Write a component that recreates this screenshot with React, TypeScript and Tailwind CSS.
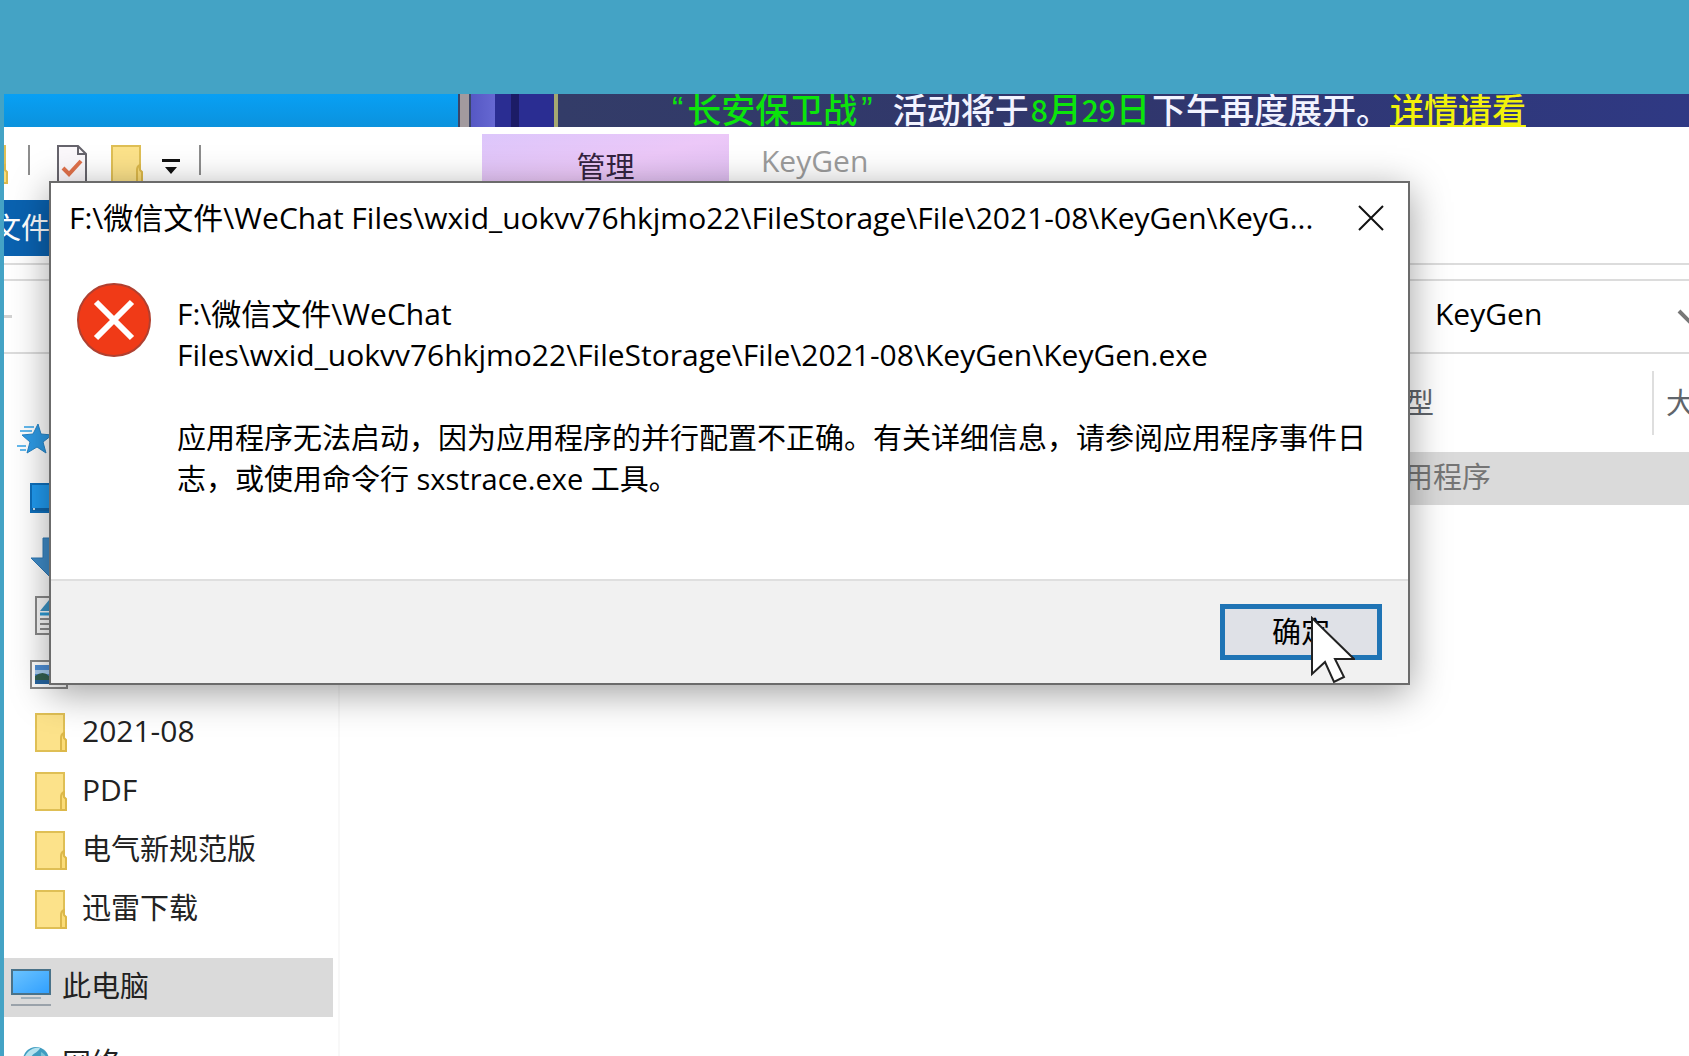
import React from "react";

const UI_FONT = "font-['Open_Sans','Noto_Sans_CJK_SC',sans-serif]";

function FolderIcon({ className = "" }: { className?: string }) {
  return (
    <svg className={className} width="32" height="39" viewBox="0 0 32 39" fill="none" aria-hidden="true">
      <path d="M1 1h28v37H1z" fill="#fce28a" stroke="#dfbf55" strokeWidth="2" />
      <path d="M26 38V25c0-2 1-4 3-5v5l2 2v11z" fill="#fbdc78" stroke="#dcb84a" strokeWidth="2" />
    </svg>
  );
}

function DocCheckIcon() {
  return (
    <svg width="30" height="40" viewBox="0 0 30 40" fill="none" aria-hidden="true">
      <path d="M1 1h20l8 8v30H1z" fill="#fbf8fb" stroke="#66646c" strokeWidth="2" />
      <path d="M21 1v8h8" stroke="#66646c" strokeWidth="2" />
      <path d="m6 23 6 6 12-13" stroke="#e0704a" strokeWidth="4" />
    </svg>
  );
}

function StarIcon() {
  return (
    <svg width="36" height="32" viewBox="0 0 36 32" aria-hidden="true">
      <path d="m22 1 3 10 11 1-9 7 3 11-9-6-10 6 3-11-8-7 11-1z" fill="#2e9be6" stroke="#2684c6" />
      <path d="M8 4h10M4 8h12M1 23h9M4 27h6" stroke="#63b9ee" strokeWidth="2" />
    </svg>
  );
}

function DesktopIcon() {
  return (
    <svg width="38" height="30" viewBox="0 0 38 30" aria-hidden="true">
      <path d="M1 1h36v28H1z" fill="#219bf0" stroke="#0e70bd" strokeWidth="2" />
      <path d="M2 25h34v3H2z" fill="#0f66ad" />
      <circle cx="4" cy="26" r="1" fill="#fff" />
    </svg>
  );
}

function DownloadIcon() {
  return (
    <svg width="38" height="40" viewBox="0 0 38 40" aria-hidden="true">
      <path d="M13 1h12v20h12L19 39 1 21h12z" fill="#3f8cc9" stroke="#2f78b4" />
    </svg>
  );
}

function DocumentIcon() {
  return (
    <svg width="30" height="39" viewBox="0 0 30 39" fill="none" aria-hidden="true">
      <path d="M1 1h28v37H1z" fill="#fbfbfb" stroke="#8a8a8a" strokeWidth="2" />
      <path d="m5 15 9-11 9 11z" fill="#3c93c4" />
      <path d="M5 18h20" stroke="#2d9cd6" strokeWidth="3" />
      <path d="M5 23h20M5 28h20M5 33h20" stroke="#8c8c8c" strokeWidth="2" />
    </svg>
  );
}

function PictureIcon() {
  return (
    <svg width="38" height="29" viewBox="0 0 38 29" aria-hidden="true">
      <path d="M1 1h36v27H1z" fill="#fff" stroke="#8a8a8a" strokeWidth="2" />
      <path d="M5 5h28v19H5z" fill="#4f8fd6" />
      <path d="M5 10h28v4H5z" fill="#a9cdee" />
      <path d="M5 16q8-6 14 0t14 0v4H5z" fill="#33604f" />
      <path d="M5 20h28v4H5z" fill="#2765a0" />
    </svg>
  );
}

function ComputerIcon() {
  return (
    <svg width="40" height="38" viewBox="0 0 40 38" aria-hidden="true">
      <defs>
        <linearGradient id="screen" x1="0" y1="0" x2="1" y2="1">
          <stop offset="0" stopColor="#6cc4ff" />
          <stop offset="1" stopColor="#2f9fff" />
        </linearGradient>
      </defs>
      <path d="M1 1h38v24H1z" fill="url(#screen)" stroke="#4a7289" strokeWidth="2" />
      <path d="M10 29h20" stroke="#9fb0bb" strokeWidth="2" />
      <path d="M0 36h40" stroke="#9aa2aa" strokeWidth="2" />
    </svg>
  );
}

function NetworkIcon() {
  return (
    <svg width="40" height="38" viewBox="0 0 40 38" aria-hidden="true">
      <circle cx="25" cy="14" r="13" fill="#3f9cc0" />
      <path d="M14 10c4-7 10-9 15-8-2 5-8 5-9 10-2 2-5 1-6-2z" fill="#b5e2ee" />
      <path d="M30 6c4 2 7 6 6 11-3 0-7-5-6-11z" fill="#79c3d8" />
      <path d="M1 16h22v15H1z" fill="#58b9fb" stroke="#4a7289" strokeWidth="2" />
    </svg>
  );
}

const pinned = [
  { label: "快速访问", icon: <StarIcon />, pad: "pl-3" },
  { label: "桌面", icon: <DesktopIcon />, pad: "pl-[26px]" },
  { label: "下载", icon: <DownloadIcon />, pad: "pl-[26px]" },
  { label: "文档", icon: <DocumentIcon />, pad: "pl-[31px]" },
];

const folders = [
  { name: "2021-08", size: "text-[30px]" },
  { name: "PDF", size: "text-[30px]" },
  { name: "电气新规范版", size: "text-[29px]" },
  { name: "迅雷下载", size: "text-[29px]" },
];

function Banner() {
  return (
    <div className="flex h-[33px] overflow-hidden">
      <div className="w-[454px] shrink-0 bg-gradient-to-b from-[#08a0f4] to-[#0b92dd]" />
      <div className="w-[13px] shrink-0 border-x-2 border-[#3a4568] bg-[#a29a9e]" />
      <div className="flex w-[83px] shrink-0 bg-[#2a2d92]">
        <div className="w-6 bg-gradient-to-r from-[#5658c4] to-[#6668d2]" />
        <div className="ml-4 w-2 bg-[#1c1c66]" />
      </div>
      <div className="flex flex-1 items-center whitespace-nowrap border-l-4 border-[#a5a872] bg-gradient-to-r from-[#333c68] via-[#30366c] to-[#2f3984] pb-1 pl-[114px] font-['Noto_Sans_CJK_SC',sans-serif] text-[34px] font-medium leading-[33px] text-[#f2f3ff]">
        <span className="flex text-[#0be50b]">
          <span className="font-['Liberation_Sans']">“</span>
          <span className="pl-1">长安保卫战</span>
          <span className="pl-1 font-['Liberation_Sans']">”</span>
        </span>
        <span className="pl-5">活动将于</span>
        <span className="px-[2px] text-[#0be50b]">
          <span className="text-[30px]">8</span>月<span className="text-[30px]">29</span>日
        </span>
        <span>下午再度展开。</span>
        <a href="#details" className="text-[#f2f20a] underline decoration-2 underline-offset-2">
          详情请看
        </a>
      </div>
    </div>
  );
}

function TitleBar() {
  return (
    <div className="flex h-[73px]">
      <div className="flex w-[478px] shrink-0 items-start overflow-hidden pt-[18px]">
        <FolderIcon className="-ml-7 shrink-0" />
        <div className="ml-5 h-[30px] w-[2px] bg-[#8d8d8d]" />
        <button type="button" aria-label="属性" className="ml-[27px]">
          <DocCheckIcon />
        </button>
        <button type="button" aria-label="新建文件夹" className="ml-6">
          <FolderIcon />
        </button>
        <button type="button" aria-label="自定义快速访问工具栏" className="ml-[19px] mt-[14px]">
          <svg width="18" height="16" viewBox="0 0 18 16" aria-hidden="true">
            <path d="M0 0h18v3H0zM3 8h12l-6 7z" fill="#111" />
          </svg>
        </button>
        <div className="ml-[19px] h-[30px] w-[2px] bg-[#8d8d8d]" />
      </div>
      <button
        type="button"
        className="mt-[7px] flex w-[247px] items-start justify-center bg-gradient-to-br from-[#dcc6fb] via-[#ecc8f8] to-[#dcbdf0] pt-[13px] text-[29px] leading-10 text-[#33233f]"
      >
        管理
      </button>
      <div className="flex-1 pl-8 pt-[14px] text-[30px] leading-10 text-[#9c9c9c]">KeyGen</div>
    </div>
  );
}

function Sidebar() {
  return (
    <nav className="w-[336px] shrink-0 border-r-2 border-[#f8f8f8] pt-[55px]">
      <ul>
        {pinned.map((item) => (
          <li key={item.label}>
            <a href="#place" aria-label={item.label} className={"flex h-[59px] items-center " + item.pad}>
              {item.icon}
            </a>
          </li>
        ))}
        <li>
          <a href="#pictures" className="flex h-[59px] items-center gap-3 pl-[26px]">
            <PictureIcon />
            <span className="pb-2">图片</span>
          </a>
        </li>
        {folders.map((folder) => (
          <li key={folder.name}>
            <a href="#folder" className="flex h-[59px] items-center gap-[15px] pb-[3px] pl-[31px]">
              <FolderIcon />
              <span className={"pb-[3px] " + folder.size}>{folder.name}</span>
            </a>
          </li>
        ))}
      </ul>
      <a href="#computer" className="mr-[5px] mt-[18px] flex h-[59px] items-center gap-[11px] bg-[#dadada] pl-[7px]">
        <ComputerIcon />
        <span className="pb-1">此电脑</span>
      </a>
      <a href="#network" className="mt-[18px] flex h-[59px] items-center gap-[11px] pl-[7px]">
        <NetworkIcon />
        <span className="pb-1">网络</span>
      </a>
    </nav>
  );
}

function FileList() {
  return (
    <main className="min-w-0 flex-1">
      <table aria-label="文件列表" className="w-full table-fixed text-left text-[#60656b]">
        <colgroup>
          <col />
          <col className="w-[285px]" />
          <col className="w-[37px]" />
        </colgroup>
        <thead>
          <tr className="h-[98px]">
            <td />
            <th className="font-normal">
              <div className="flex h-16 items-center border-l border-[#dedede] pl-2">类型</div>
            </th>
            <th className="overflow-hidden font-normal">
              <div className="flex h-16 items-center whitespace-nowrap border-l-2 border-[#dedede] pl-3">大小</div>
            </th>
          </tr>
        </thead>
        <tbody>
          <tr className="h-[53px] bg-[#dadada] text-[#757575]">
            <td />
            <td className="pb-1 pl-2">应用程序</td>
            <td />
          </tr>
        </tbody>
      </table>
    </main>
  );
}

function ErrorDialog() {
  return (
    <section
      role="dialog"
      aria-labelledby="dialog-title"
      className="absolute left-[45px] right-[279px] top-[87px] border-2 border-[#6b6b6b] bg-white text-black shadow-[0_8px_36px_rgba(0,0,0,0.38)]"
    >
      <header className="flex h-[70px] items-center justify-between pl-[18px] pr-6">
        <h1 id="dialog-title" className="whitespace-nowrap text-[30px] leading-10">
          F:\微信文件\WeChat Files\wxid_uokvv76hkjmo22\FileStorage\File\2021-08\KeyGen\KeyG...
        </h1>
        <button type="button" aria-label="关闭">
          <svg width="26" height="26" viewBox="0 0 26 26" fill="none" aria-hidden="true">
            <path d="m1 1 24 24M25 1 1 25" stroke="#111" strokeWidth="2" />
          </svg>
        </button>
      </header>
      <div className="flex items-start gap-[26px] pb-20 pl-[26px] pt-[30px]">
        <svg className="shrink-0" width="74" height="74" viewBox="0 0 74 74" fill="none" aria-hidden="true">
          <circle cx="37" cy="37" r="36" fill="#f03a17" stroke="#b04030" strokeWidth="2" />
          <path d="m19 19 36 36M55 19 19 55" stroke="#fff" strokeWidth="6" />
        </svg>
        <div className="whitespace-nowrap pt-[10px] text-[30px] leading-[41px]">
          <p>
            F:\微信文件\WeChat
            <br />
            Files\wxid_uokvv76hkjmo22\FileStorage\File\2021-08\KeyGen\KeyGen.exe
          </p>
          <p className="pt-[42px] text-[29px]">
            应用程序无法启动，因为应用程序的并行配置不正确。有关详细信息，请参阅应用程序事件日
            <br />
            志，或使用命令行 sxstrace.exe 工具。
          </p>
        </div>
      </div>
      <footer className="flex h-[104px] items-center justify-end border-t-2 border-[#dfdfdf] bg-[#f1f1f1] pr-[26px]">
        <div className="relative">
          <button
            type="button"
            className="h-14 w-[162px] border-[5px] border-[#1f74b5] bg-[#dfe1e7] text-[29px] leading-10"
          >
            确定
          </button>
          <svg className="absolute left-[91px] top-3" width="44" height="68" viewBox="0 0 44 68" aria-hidden="true">
            <path d="M1 2v56l13-12 9 20 10-5-9-18h19z" fill="#fff" stroke="#222" strokeWidth="2" />
          </svg>
        </div>
      </footer>
    </section>
  );
}

export default function App() {
  return (
    <div className={"flex h-screen flex-col overflow-hidden bg-[#44a3c5] pl-1 pt-[94px] text-[29px] leading-10 text-[#222] " + UI_FONT}>
      <div className="relative flex min-h-0 flex-1 flex-col">
        <Banner />
        <div className="flex min-h-0 flex-1 flex-col overflow-hidden bg-white">
          <TitleBar />
          <div className="flex h-[65px] shrink-0 items-start overflow-hidden border-b-2 border-[#dcdcdc]">
            <button
              type="button"
              className="-ml-8 flex h-14 items-center whitespace-nowrap bg-[#0a62b0] px-5 text-[29px] text-white"
            >
              文件
            </button>
          </div>
          <div className="mt-[14px] flex h-[75px] shrink-0 items-center justify-between overflow-hidden border-y-2 border-[#dcdcdc] text-black">
            <div className="h-[3px] w-2 bg-[#d2d2d2]" />
            <div className="flex w-[254px] items-center justify-between">
              <span className="pb-[6px] text-[30px]">KeyGen</span>
              <svg className="-mr-3 shrink-0" width="24" height="16" viewBox="0 0 24 16" fill="none" aria-hidden="true">
                <path d="m2 2 10 10L22 2" stroke="#777" strokeWidth="4" />
              </svg>
            </div>
          </div>
          <div className="flex min-h-0 flex-1">
            <Sidebar />
            <FileList />
          </div>
        </div>
        <ErrorDialog />
      </div>
    </div>
  );
}
